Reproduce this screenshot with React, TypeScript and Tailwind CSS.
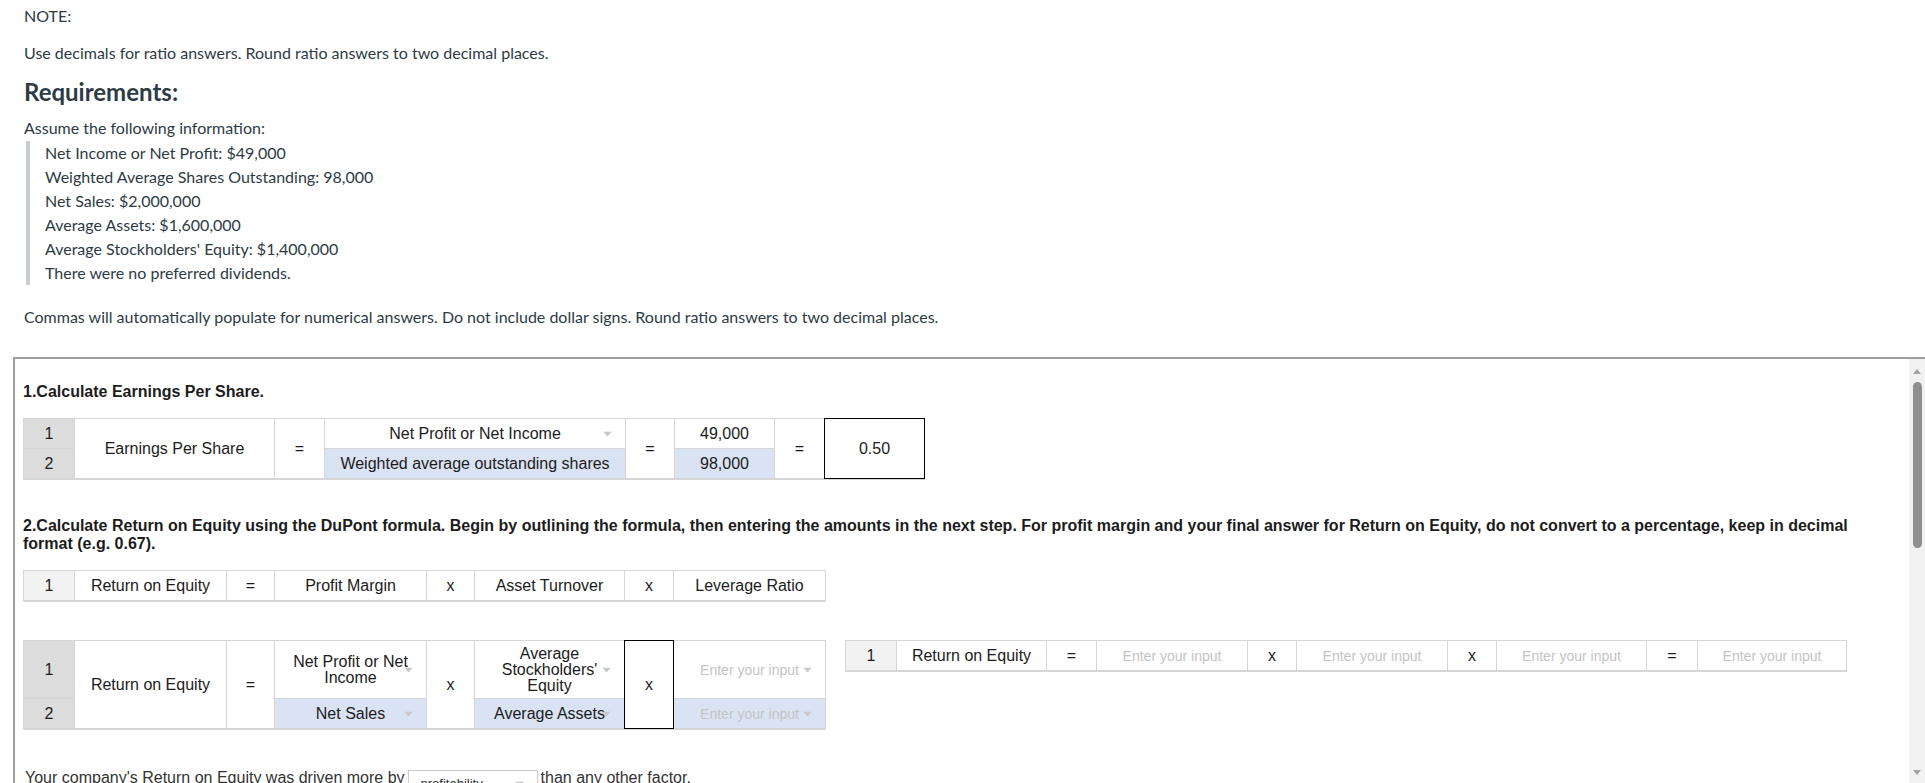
import React from "react";

const Arrow = () => (
  <svg
    className="absolute right-[13px] top-1/2 -translate-y-1/2"
    width="9"
    height="5"
    viewBox="0 0 9 5"
  >
    <path d="M0 0H9L4.5 5Z" fill="#c9c9c9" />
  </svg>
);

const base =
  "relative flex items-center justify-center text-center text-[16px] leading-[18px] text-[#1c1c1c]";
const cell = `${base} bg-white`;
const blue = `${base} bg-[#dae3f3]`;
const numDark = `${base} bg-[#dcdcdc]`;
const numLight = `${base} bg-[#f2f2f2]`;
const ph = "text-[14px] leading-[16px] text-[#c4c4c4]";

export default function App() {
  return (
    <div className="flex h-[783px] w-full flex-col overflow-hidden bg-white">
      {/* Top instructions */}
      <div className="pl-[24px] pt-[4px] font-['Lato',sans-serif] text-[16px] leading-[24px] text-[#2d3b45]">
        <p>NOTE:</p>
        <p className="mt-[13px]">
          Use decimals for ratio answers. Round ratio answers to two decimal places.
        </p>
        <h2 className="mt-[12px] text-[24px] font-bold leading-[30px]">Requirements:</h2>
        <p className="mt-[9px]">Assume the following information:</p>
        <div className="ml-[2px] mt-[1px] border-l-[4px] border-[#c7cdd1] pl-[15px]">
          <p>Net Income or Net Profit: $49,000</p>
          <p>Weighted Average Shares Outstanding: 98,000</p>
          <p>Net Sales: $2,000,000</p>
          <p>Average Assets: $1,600,000</p>
          <p>Average Stockholders' Equity: $1,400,000</p>
          <p>There were no preferred dividends.</p>
        </div>
        <p className="mt-[20px]">
          Commas will automatically populate for numerical answers. Do not include dollar signs. Round ratio answers to two decimal places.
        </p>
      </div>

      {/* Question panel */}
      <div className="ml-[13px] mt-[28px] flex min-h-0 flex-1 border-l-2 border-t-2 border-[#9e9e9e]">
        <div className="min-w-0 flex-1 overflow-hidden pl-[8px] pr-[20px] pt-[24px] font-['Liberation_Sans',Arial,sans-serif] text-[#1c1c1c]">
          <h3 className="text-[16px] font-bold leading-[18px]">1.Calculate Earnings Per Share.</h3>

          {/* Table 1 */}
          <div className="mt-[17px] grid w-fit grid-cols-[50px_199px_49px_300px_48px_99px_49px_99px] grid-rows-[29px_29px] gap-px bg-[#d6d6d6] p-px pb-[2px]">
            <div className={numDark}>1</div>
            <div className={`${cell} row-span-2`}>Earnings Per Share</div>
            <div className={`${cell} row-span-2`}>=</div>
            <div className={cell}>
              Net Profit or Net Income
              <Arrow />
            </div>
            <div className={`${cell} row-span-2`}>=</div>
            <div className={cell}>49,000</div>
            <div className={`${cell} row-span-2`}>=</div>
            <div className={`${cell} row-span-2 outline outline-1 outline-black`}>0.50</div>
            <div className={numDark}>2</div>
            <div className={blue}>Weighted average outstanding shares</div>
            <div className={blue}>98,000</div>
          </div>

          <h3 className="mt-[37px] text-[16px] font-bold leading-[18px]">
            2.Calculate Return on Equity using the DuPont formula. Begin by outlining the formula, then entering the amounts in the next step. For profit margin and your final answer for Return on Equity, do not convert to a percentage, keep in decimal
            <br />
            format (e.g. 0.67).
          </h3>

          {/* DuPont outline table */}
          <div className="mt-[17px] grid w-fit grid-cols-[50px_151px_47px_151px_47px_149px_48px_151px] grid-rows-[29px] gap-px bg-[#d6d6d6] p-px pb-[2px]">
            <div className={numLight}>1</div>
            <div className={cell}>Return on Equity</div>
            <div className={cell}>=</div>
            <div className={cell}>Profit Margin</div>
            <div className={cell}>x</div>
            <div className={cell}>Asset Turnover</div>
            <div className={cell}>x</div>
            <div className={cell}>Leverage Ratio</div>
          </div>

          <div className="mt-[38px] flex items-start gap-[19px]">
            {/* Table 3 */}
            <div className="grid w-fit grid-cols-[50px_151px_47px_151px_47px_149px_48px_151px] grid-rows-[57px_29px] gap-px bg-[#d6d6d6] p-px pb-[2px]">
              <div className={numDark}>1</div>
              <div className={`${cell} row-span-2`}>Return on Equity</div>
              <div className={`${cell} row-span-2`}>=</div>
              <div className={cell}>
                <span className="leading-[16px]">
                  Net Profit or Net
                  <br />
                  Income
                </span>
                <Arrow />
              </div>
              <div className={`${cell} row-span-2`}>x</div>
              <div className={cell}>
                <span className="leading-[16px]">
                  Average
                  <br />
                  Stockholders'
                  <br />
                  Equity
                </span>
                <Arrow />
              </div>
              <div className={`${cell} row-span-2 outline outline-1 outline-black`}>x</div>
              <div className={cell}>
                <span className={ph}>Enter your input</span>
                <Arrow />
              </div>
              <div className={numDark}>2</div>
              <div className={blue}>
                Net Sales
                <Arrow />
              </div>
              <div className={blue}>
                Average Assets
                <Arrow />
              </div>
              <div className={blue}>
                <span className={ph}>Enter your input</span>
                <Arrow />
              </div>
            </div>

            {/* Right table */}
            <div className="grid w-fit grid-cols-[50px_149px_49px_150px_48px_150px_48px_149px_50px_148px] grid-rows-[29px] gap-px bg-[#d6d6d6] p-px pb-[2px]">
              <div className={numLight}>1</div>
              <div className={cell}>Return on Equity</div>
              <div className={cell}>=</div>
              <div className={cell}>
                <span className={ph}>Enter your input</span>
              </div>
              <div className={cell}>x</div>
              <div className={cell}>
                <span className={ph}>Enter your input</span>
              </div>
              <div className={cell}>x</div>
              <div className={cell}>
                <span className={ph}>Enter your input</span>
              </div>
              <div className={cell}>=</div>
              <div className={cell}>
                <span className={ph}>Enter your input</span>
              </div>
            </div>
          </div>

          {/* Bottom sentence */}
          <div className="mt-[39px] flex items-start text-[16px] leading-[18px] text-[#333]">
            <span className="pl-[2px]">Your company's Return on Equity was driven more by</span>
            <div className="relative mx-[3px] mt-[1px] flex h-[28px] w-[130px] items-center border border-[#cccccc] bg-white pl-[12px] text-[13px] text-[#333]">
              profitability
              <Arrow />
            </div>
            <span>than any other factor.</span>
          </div>
        </div>

        {/* Scrollbar */}
        <div className="flex w-[16px] shrink-0 flex-col items-center bg-[#f1f1f1]">
          <svg className="mt-[10px]" width="8" height="5" viewBox="0 0 8 5">
            <path d="M4 0L8 5H0Z" fill="#a3a3a3" />
          </svg>
          <div className="mt-[8px] h-[166px] w-[9px] rounded-full bg-[#8f8f8f]" />
          <svg className="mb-[8px] mt-auto" width="8" height="5" viewBox="0 0 8 5">
            <path d="M0 0H8L4 5Z" fill="#a3a3a3" />
          </svg>
        </div>
      </div>
    </div>
  );
}
